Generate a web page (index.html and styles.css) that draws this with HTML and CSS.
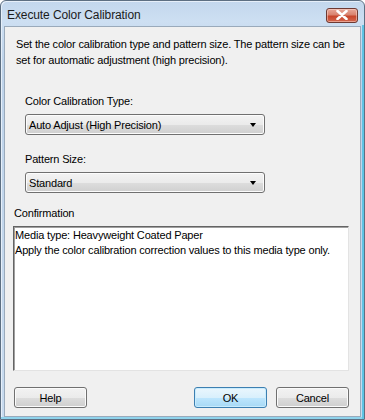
FILE: index.html
```html
<!DOCTYPE html>
<html>
<head>
<meta charset="utf-8">
<link rel="stylesheet" href="styles.css">
</head>
<body>
<div class="window">
  <div class="titlebar">
    <span class="title">Execute Color Calibration</span>
    <div class="close">
      <svg width="16" height="10" viewBox="0 0 16 10"><path d="M3.5 1 L12.5 9 M12.5 1 L3.5 9" stroke="#fff" stroke-width="2.6" stroke-linecap="round"/></svg>
    </div>
  </div>
  <div class="client">
    <p class="intro">Set the color calibration type and pattern size. The pattern size can be set for automatic adjustment (high precision).</p>
    <div class="field first">
      <div class="label">Color Calibration Type:</div>
      <div class="combo"><span>Auto Adjust (High Precision)</span><i class="arrow"></i></div>
    </div>
    <div class="field second">
      <div class="label">Pattern Size:</div>
      <div class="combo"><span>Standard</span><i class="arrow"></i></div>
    </div>
    <div class="conf-label">Confirmation</div>
    <div class="textbox">Media type: Heavyweight Coated Paper<br>Apply the color calibration correction values to this media type only.</div>
    <div class="buttons">
      <div class="btn">Help</div>
      <div class="spacer"></div>
      <div class="btn default">OK</div>
      <div class="btn">Cancel</div>
    </div>
  </div>
</div>
</body>
</html>
```
FILE: styles.css
```css
html, body {
  margin: 0;
  padding: 0;
  background: #ffffff;
}
body {
  font-family: "Liberation Sans", Arial, sans-serif;
  font-size: 11px;
  letter-spacing: -0.17px;
  color: #000;
}
.window {
  width: 365px;
  height: 420px;
  box-sizing: border-box;
  border: 1px solid #5d6f82;
  border-radius: 6px 6px 0 0;
  background: linear-gradient(180deg, #c3d7ed 0px, #cddff2 20px, #bed3ea 60px, #c8dbef 420px);
  display: flex;
  flex-direction: column;
  padding: 0 3px 2px 3px;
  box-shadow: inset 1px 1px 0 #e6eff9;
  position: relative;
}
.window::after {
  content: "";
  position: absolute;
  right: 0;
  top: 24px;
  bottom: 0;
  width: 2px;
  background: #5fc3e4;
}
.window::before {
  content: "";
  position: absolute;
  left: 0;
  right: 0;
  bottom: 0;
  height: 2px;
  background: #8fd3ec;
}
.titlebar {
  height: 25px;
  display: flex;
  align-items: center;
  justify-content: space-between;
  padding: 0 2px 0 3px;
  flex: none;
}
.title {
  font-family: "Liberation Sans", Arial, sans-serif;
  font-size: 12px;
  letter-spacing: -0.1px;
  color: #1b1b1b;
  margin-top: 2px;
}
.close {
  width: 30px;
  height: 13px;
  margin-top: 3px;
  margin-right: 1px;
  border: 1px solid #6d3a33;
  border-radius: 3px;
  background: linear-gradient(180deg, #e8a89a 0%, #d9826e 45%, #c7452b 55%, #d2674f 100%);
  display: flex;
  align-items: center;
  justify-content: center;
  box-shadow: inset 0 0 0 1px rgba(255,220,210,0.5);
}
.client {
  flex: 1;
  background: #f0f0f0;
  border: 1px solid #9aaabb;
  display: flex;
  flex-direction: column;
  padding: 0 11px 0 8px;
}
.intro {
  margin: 9px 0 0 3px;
  line-height: 16px;
}
.field {
  margin-left: 12px;
  width: 240px;
}
.field.first { margin-top: 25px; }
.field.second { margin-top: 16px; }
.label {
  line-height: 16px;
  margin-bottom: 5px;
}
.combo {
  height: 19px;
  border: 1px solid #707070;
  border-radius: 3px;
  background: linear-gradient(180deg, #f3f3f3 0%, #ebebeb 50%, #dddddd 51%, #cfcfcf 100%);
  display: flex;
  align-items: center;
  justify-content: space-between;
  padding: 0 8px 0 3px;
  box-shadow: inset 0 0 0 1px #fcfcfc;
}
.arrow {
  width: 0;
  height: 0;
  border-left: 3.5px solid transparent;
  border-right: 3.5px solid transparent;
  border-top: 4px solid #000;
  margin-top: 1px;
}
.conf-label {
  margin-top: 12px;
  line-height: 16px;
  margin-left: 1px;
}
.textbox {
  margin-top: 5px;
  height: 141px;
  background: #fff;
  border-top: 1px solid #646464;
  border-left: 1px solid #646464;
  border-right: 1px solid #e3e3e3;
  border-bottom: 1px solid #e3e3e3;
  padding: 1px 1px;
  line-height: 15px;
  box-shadow: inset 1px 1px 0 #a0a0a0;
}
.buttons {
  display: flex;
  margin-top: 16px;
  gap: 9px;
  padding-left: 1px;
}
.spacer { flex: 1; }
.btn {
  width: 71px;
  height: 19px;
  border: 1px solid #707070;
  border-radius: 3px;
  background: linear-gradient(180deg, #f2f2f2 0%, #ebebeb 50%, #dddddd 51%, #cfcfcf 100%);
  box-shadow: inset 0 0 0 1px #fbfbfb;
  display: flex;
  align-items: center;
  justify-content: center;
}
.btn.default {
  border-color: #3c7fb1;
  background: linear-gradient(180deg, #eaf6fd 0%, #d9f0fc 50%, #bee6fd 51%, #a7d9f5 100%);
  box-shadow: inset 0 0 0 1px #c9ecfd;
}
```
